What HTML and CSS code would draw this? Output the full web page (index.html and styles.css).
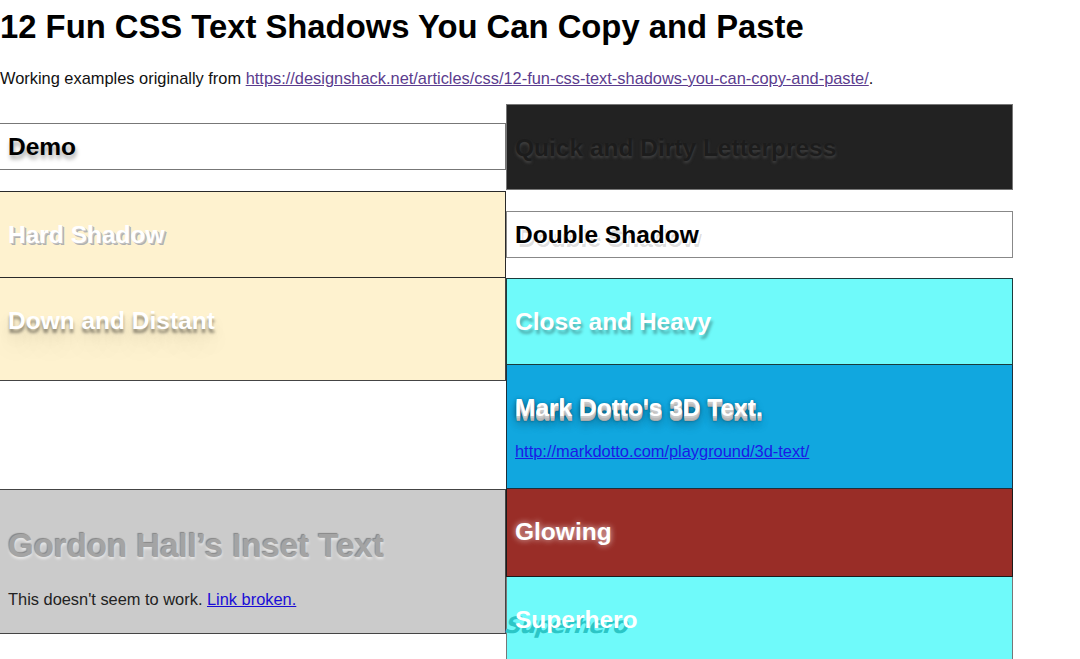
FILE: index.html
```html
<!DOCTYPE html>
<html lang="en">
<head>
<meta charset="utf-8">
<title>12 Fun CSS Text Shadows</title>
<link rel="stylesheet" href="styles.css">
</head>
<body>
<h1 class="title">12 Fun CSS Text Shadows You Can Copy and Paste</h1>
<p class="intro">Working examples originally from <a class="visited" href="#">https://designshack.net/articles/css/12-fun-css-text-shadows-you-can-copy-and-paste/</a>.</p>
<div class="grid">
  <div class="col col-left">
    <div class="box box-demo"><h2 class="tight demo">Demo</h2></div>
    <div class="box box-hard"><h2 class="hard">Hard Shadow</h2></div>
    <div class="box box-down"><h2 class="down">Down and Distant</h2></div>
    <div class="box box-gordon">
      <h2 class="gordon">Gordon Hall’s Inset Text</h2>
      <p class="note">This doesn't seem to work. <a href="#">Link broken.</a></p>
    </div>
  </div>
  <div class="col col-right">
    <div class="box box-quick"><h2 class="quick">Quick and Dirty Letterpress</h2></div>
    <div class="box box-double"><h2 class="tight double">Double Shadow</h2></div>
    <div class="box box-close"><h2 class="close">Close and Heavy</h2></div>
    <div class="box box-mark">
      <h2 class="mark">Mark Dotto's 3D Text.</h2>
      <p class="note"><a href="#">http://markdotto.com/playground/3d-text/</a></p>
    </div>
    <div class="box box-glow"><h2 class="glow">Glowing</h2></div>
    <div class="box box-hero"><h2 class="hero"><span class="hero-copy" aria-hidden="true">Superhero</span><span class="hero-text">Superhero</span></h2></div>
  </div>
</div>
</body>
</html>
```
FILE: styles.css
```css
html, body {
  margin: 0;
  padding: 0;
  background: #fff;
}
body {
  font-family: "Liberation Sans", Arial, sans-serif;
  font-size: 16.4px;
  color: #111;
  overflow: hidden;
}
a { color: #1a0dd6; }
a.visited { color: #5b3c8e; }

.title {
  margin: 8px 0 0;
  font-size: 32.8px;
  line-height: 37px;
  font-weight: bold;
  color: #000;
}
.intro {
  margin: 24px 0 0;
  line-height: 19px;
}
.grid {
  display: flex;
  align-items: flex-start;
  margin-top: 16px;
}
.col { display: flex; flex-direction: column; }
.col-left { width: 506px; }
.col-right { width: 507px; }

.box {
  border: 1px solid #333;
  padding: 8px;
}
.col-left .box { border-left: 0; }
.box h2 {
  margin: 20px 0;
  font-size: 24.5px;
  line-height: 29px;
  font-weight: bold;
}
.box h2.tight { margin: 0; }
.box .note { margin: 0 0 16px; line-height: 19px; }

/* left column */
.box-demo { margin-top: 19px; border-color: #777; background: #fff; }
.demo { color: #000; text-shadow: 1px 4px 4px rgba(0,0,0,0.35); }

.box-hard { margin-top: 21px; background: #fef2cf; border-color: #2a2a2a; }
.hard { color: #fff; text-shadow: 1px 1px 0 #c4c4c4, 2px 2px 0 #b0b0b0; }

.box-down { border-top: 0; background: #fef2cf; border-color: #444; padding-bottom: 25px; }
.down {
  color: #fff;
  text-shadow: 0 4px 3px rgba(0,0,0,0.4), 0 8px 13px rgba(0,0,0,0.1), 0 18px 23px rgba(0,0,0,0.1);
}

.box-gordon { margin-top: 108px; background: #cbcbcb; border-color: #444; padding-bottom: 8px; }
.box h2.gordon {
  margin: 29px 0 26px;
  font-size: 33px;
  line-height: 37px;
  color: #a4a4a4;
  text-shadow: -1px -1px 1px rgba(0,0,0,0.35), 0 2px 3px rgba(255,255,255,0.6);
}
.box-gordon .note { color: #222; }

/* right column */
.box-quick { background: #222; border-color: #777; }
.box h2.quick { margin-bottom: 19px; color: #1c1c1c; text-shadow: 0 2px 3px #444; }

.box-double { margin-top: 21px; background: #fff; border-color: #888; }
.double { color: #000; text-shadow: 2px 1px 0 #fff, 3px 4px 0 rgba(0,0,0,0.15); }

.box-close { margin-top: 20px; background: #6ffafa; border-color: #1c3b3b; }
.close { color: #fff; text-shadow: 2px 4px 3px rgba(0,0,0,0.3); }

.box-mark { border-top: 0; background: #11a7df; border-color: #1d2f3a; padding-bottom: 11px; }
.mark {
  color: #fff;
  text-shadow: 0 1px 0 #ccc, 0 2px 0 #c9c9c9, 0 3px 0 #bbb, 0 4px 0 #b9b9b9, 0 5px 0 #aaa,
    0 6px 1px rgba(0,0,0,0.1), 0 0 5px rgba(0,0,0,0.1), 0 1px 3px rgba(0,0,0,0.3),
    0 3px 5px rgba(0,0,0,0.2), 0 5px 10px rgba(0,0,0,0.25), 0 10px 10px rgba(0,0,0,0.2);
}
.box-mark a { color: #1a1ae6; }

.box-glow { border-top: 0; background: #992d27; border-color: #1a1a1a; padding-bottom: 10px; }
.glow { color: #fff; text-shadow: 0 0 6px rgba(255,255,255,0.75); }

.box-hero { border-top: 0; background: #6ffafa; border-color: #777; height: 200px; }
.hero { position: relative; color: #fff; }
.hero-copy {
  position: absolute;
  left: -9px;
  top: 6px;
  color: #2cc6c6;
  font-family: "DejaVu Sans", sans-serif;
  font-style: italic;
  font-weight: 900;
  font-size: 23px;
  letter-spacing: -1.5px;
  transform: skewX(-8deg);
}
.hero-text { position: relative; }
```
